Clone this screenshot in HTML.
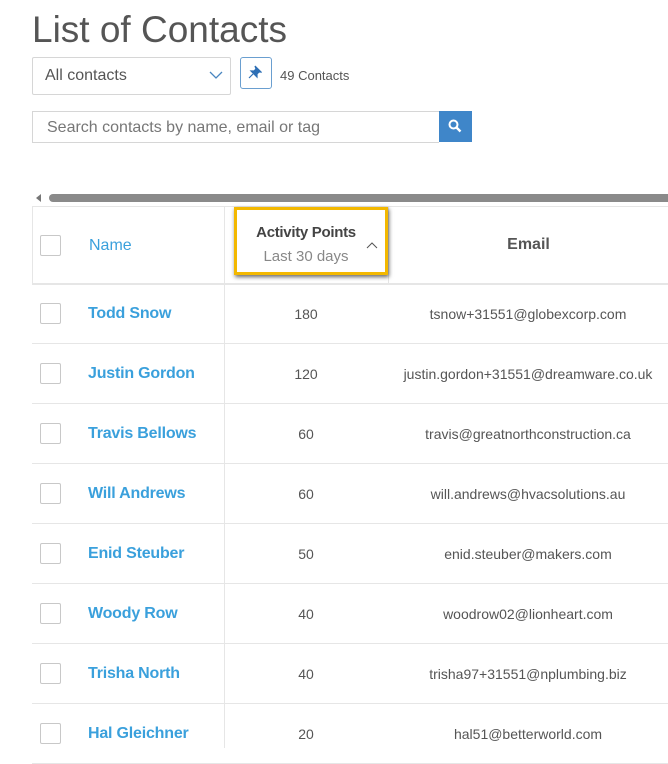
<!DOCTYPE html>
<html><head><style>
body{margin:0;width:668px;height:748px;overflow:hidden;background:#fff;font-family:"Liberation Sans",sans-serif;position:relative}
.a{position:absolute}
.row{position:absolute;left:32px;width:636px;height:60px;border-bottom:1px solid #e6e6e6}
.cb{position:absolute;left:8px;width:19px;height:19px;border:1px solid #c8c8c8;border-radius:2px;background:#fff}
.nm{position:absolute;left:56px;color:#3aa0dc;font-size:16px;font-weight:bold;letter-spacing:-0.2px}
.pt{position:absolute;left:192px;width:164px;text-align:center;color:#555;font-size:14px}
.em{position:absolute;left:356px;width:280px;text-align:center;color:#555;font-size:14px;white-space:nowrap}
</style></head><body>
<div class="a" style="left:32px;top:9px;font-size:37px;color:#555">List of Contacts</div>
<div class="a" style="left:32px;top:57px;width:197px;height:36px;border:1px solid #d6d6d6;border-radius:2px"></div>
<div class="a" style="left:45px;top:67px;font-size:16px;color:#555">All contacts</div>
<svg class="a" style="left:209px;top:71px" width="14" height="9"><path d="M1 1l6 6 6-6" fill="none" stroke="#4a86c0" stroke-width="1.3"/></svg>
<div class="a" style="left:240px;top:57px;width:30px;height:30px;border:1px solid #6a9fd0;border-radius:3px"></div>
<svg class="a" style="left:248px;top:65px" width="14" height="14"><path d="M7 1l6 6-2 0-2 2 0 3-6-6 3 0 2-2z M5 9l-4 4" fill="#2e6fb5" stroke="#2e6fb5" stroke-width="1.2"/></svg>
<div class="a" style="left:280px;top:68px;font-size:13px;color:#555">49 Contacts</div>
<div class="a" style="left:32px;top:111px;width:406px;height:30px;border:1px solid #d6d6d6;border-right:none"></div>
<div class="a" style="left:47px;top:119px;font-size:16px;color:#777">Search contacts by name, email or tag</div>
<div class="a" style="left:439px;top:111px;width:33px;height:31px;background:#3f86c9"></div>
<svg class="a" style="left:447px;top:118px" width="16" height="16"><circle cx="6.5" cy="6.5" r="4" fill="none" stroke="#fff" stroke-width="2"/><path d="M9.5 9.5l4 4" stroke="#fff" stroke-width="2.4"/></svg>
<div class="a" style="left:36px;top:194px;width:0;height:0;border-top:4px solid transparent;border-bottom:4px solid transparent;border-right:5px solid #777"></div>
<div class="a" style="left:49px;top:194px;width:619px;height:8px;background:#8a8a8a;border-radius:4px 0 0 4px"></div>
<div class="a" style="left:32px;top:206px;width:636px;height:76px;border-top:1px solid #e6e6e6;border-left:1px solid #e6e6e6;border-bottom:2px solid #e6e6e6"></div>
<div class="a" style="left:224px;top:206px;width:1px;height:542px;background:#e6e6e6"></div>
<div class="a" style="left:388px;top:206px;width:1px;height:78px;background:#e6e6e6"></div>
<div class="cb" style="left:40px;top:235px"></div>
<div class="a" style="left:89px;top:237px;font-size:16px;color:#3aa0dc">Name</div>
<div class="a" style="left:234px;top:207px;width:148px;height:62px;border:3px solid #f3b800;box-shadow:1px 2px 4px rgba(0,0,0,.6);background:#fff"></div>
<div class="a" style="left:237px;top:224px;width:138px;text-align:center;font-size:15px;color:#444;font-weight:bold;letter-spacing:-0.3px">Activity Points</div>
<div class="a" style="left:237px;top:248px;width:138px;text-align:center;font-size:15px;color:#888">Last 30 days</div>
<svg class="a" style="left:366px;top:241px" width="12" height="8"><path d="M1 7l5-5 5 5" fill="none" stroke="#555" stroke-width="1"/></svg>
<div class="a" style="left:389px;top:236px;width:279px;text-align:center;font-size:16px;color:#555;font-weight:bold">Email</div>

<div class="row" style="top:283px"><div class="cb" style="top:20px"></div><div class="nm" style="top:22px">Todd Snow</div><div class="pt" style="top:23px">180</div><div class="em" style="top:23px">tsnow+31551@globexcorp.com</div></div>
<div class="row" style="top:343px"><div class="cb" style="top:20px"></div><div class="nm" style="top:22px">Justin Gordon</div><div class="pt" style="top:23px">120</div><div class="em" style="top:23px">justin.gordon+31551@dreamware.co.uk</div></div>
<div class="row" style="top:403px"><div class="cb" style="top:20px"></div><div class="nm" style="top:22px">Travis Bellows</div><div class="pt" style="top:23px">60</div><div class="em" style="top:23px">travis@greatnorthconstruction.ca</div></div>
<div class="row" style="top:463px"><div class="cb" style="top:20px"></div><div class="nm" style="top:22px">Will Andrews</div><div class="pt" style="top:23px">60</div><div class="em" style="top:23px">will.andrews@hvacsolutions.au</div></div>
<div class="row" style="top:523px"><div class="cb" style="top:20px"></div><div class="nm" style="top:22px">Enid Steuber</div><div class="pt" style="top:23px">50</div><div class="em" style="top:23px">enid.steuber@makers.com</div></div>
<div class="row" style="top:583px"><div class="cb" style="top:20px"></div><div class="nm" style="top:22px">Woody Row</div><div class="pt" style="top:23px">40</div><div class="em" style="top:23px">woodrow02@lionheart.com</div></div>
<div class="row" style="top:643px"><div class="cb" style="top:20px"></div><div class="nm" style="top:22px">Trisha North</div><div class="pt" style="top:23px">40</div><div class="em" style="top:23px">trisha97+31551@nplumbing.biz</div></div>
<div class="row" style="top:703px"><div class="cb" style="top:20px"></div><div class="nm" style="top:22px">Hal Gleichner</div><div class="pt" style="top:23px">20</div><div class="em" style="top:23px">hal51@betterworld.com</div></div>
</body></html>
